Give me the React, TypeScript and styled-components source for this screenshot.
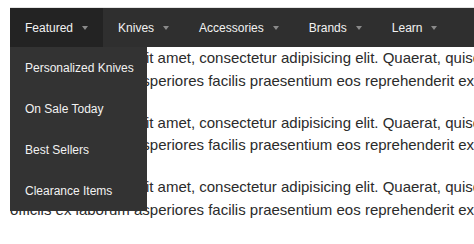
import React from "react";
import styled, { createGlobalStyle } from "styled-components";

const Global = createGlobalStyle`
  html, body { overflow: hidden; }
  body {
    margin: 7px 0 0 10px;
    font-family: "Liberation Sans", Arial, sans-serif;
    background: #ffffff;
  }
`;

const Page = styled.div`
  position: relative;
`;

const NavBar = styled.nav`
  position: relative;
  z-index: 2;
  display: flex;
  height: 39px;
  background: #2f2f2f;
  border-top: 1px solid #e4e4e4;
`;

const NavItem = styled.div<{ $active?: boolean }>`
  position: relative;
  display: flex;
  align-items: center;
  padding: 0 15px;
  height: 100%;
  color: #f2f2f2;
  font-size: 12px;
  background: ${(p) => (p.$active ? "#232323" : "transparent")};
`;

const Caret = styled.span`
  display: inline-block;
  margin-left: 9px;
  margin-top: 1px;
  width: 0;
  height: 0;
  border-left: 3.5px solid transparent;
  border-right: 3.5px solid transparent;
  border-top: 4px solid #8a8a8a;
`;

const Dropdown = styled.ul`
  position: absolute;
  top: 39px;
  left: 0;
  z-index: 5;
  margin: 0;
  padding: 0;
  list-style: none;
  width: 137px;
  background: #333333;
`;

const DropItem = styled.li`
  display: flex;
  align-items: center;
  height: 41px;
  padding-left: 15px;
  color: #f2f2f2;
  font-size: 12px;
  white-space: nowrap;
`;

const Content = styled.div`
  width: 960px;
`;

const Para = styled.p`
  margin: 0 0 19.5px;
  font-size: 15px;
  line-height: 22.5px;
  color: #2b2b2b;
  white-space: nowrap;
`;

const navItems = ["Featured", "Knives", "Accessories", "Brands", "Learn"];
const dropItems = ["Personalized Knives", "On Sale Today", "Best Sellers", "Clearance Items"];

export default function App() {
  return (
    <Page>
      <Global />
      <NavBar>
        {navItems.map((n, i) => (
          <NavItem key={n} $active={i === 0}>
            {n}
            <Caret />
            {i === 0 && (
              <Dropdown>
                {dropItems.map((d) => (
                  <DropItem key={d}>{d}</DropItem>
                ))}
              </Dropdown>
            )}
          </NavItem>
        ))}
      </NavBar>
      <Content>
        {[0, 1, 2].map((k) => (
          <Para key={k}>
            Lorem ipsum dolor sit amet, consectetur adipisicing elit. Quaerat, quisquam nemo voluptas
            <br />
            officiis ex laborum asperiores facilis praesentium eos reprehenderit expedita.
          </Para>
        ))}
      </Content>
    </Page>
  );
}
